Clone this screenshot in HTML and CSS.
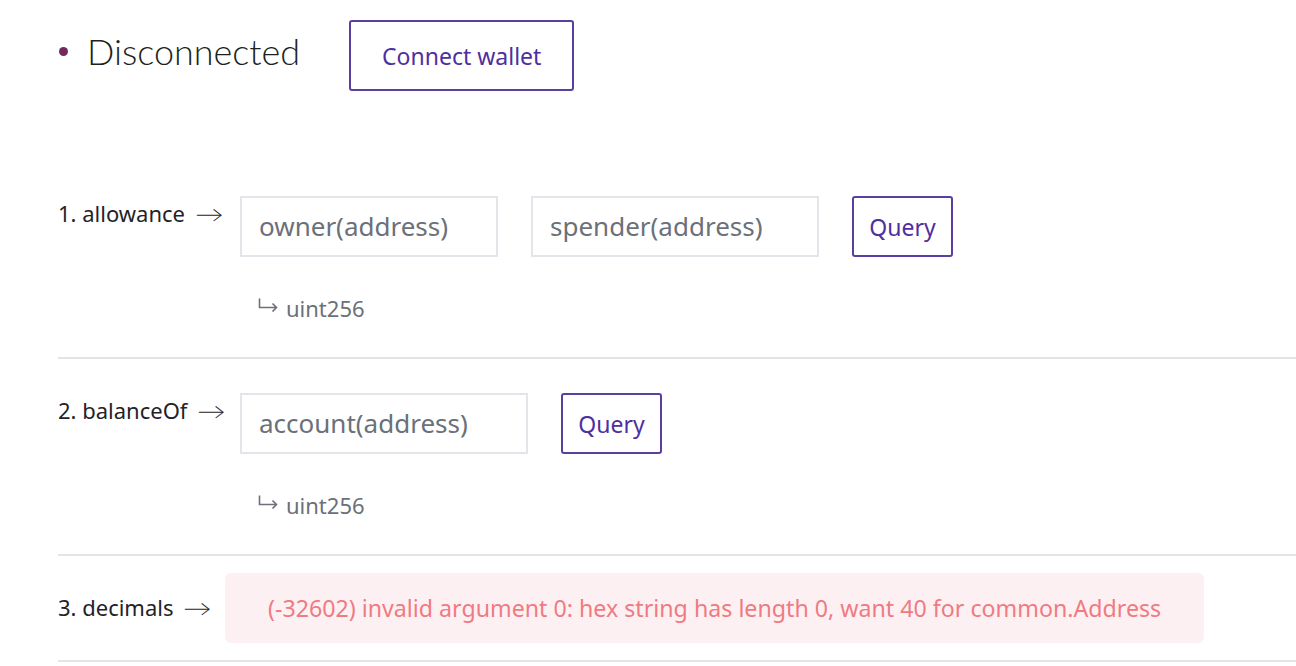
FILE: index.html
```html
<!DOCTYPE html>
<html>
<head>
<meta charset="utf-8">
<link rel="stylesheet" href="styles.css">
</head>
<body>
<div class="page">
  <header class="header">
    <div class="status"><span class="dot"></span><span class="status-text">Disconnected</span></div>
    <button class="btn btn-connect">Connect wallet</button>
  </header>

  <section class="row">
    <div class="line">
      <div class="label">1. allowance <span class="arrow">→</span></div>
      <input class="field w258" placeholder="owner(address)">
      <input class="field w288" placeholder="spender(address)">
      <button class="btn btn-query">Query</button>
    </div>
    <div class="returns"><svg class="ret-arrow" width="20" height="14" viewBox="0 0 20 14" aria-label="↳"><path d="M1.5 0.5 V9.5 H18.5 M14.5 5.5 L18.5 9.5 L14.5 13.5" fill="none" stroke="#6b7079" stroke-width="1.6" stroke-linejoin="miter"/></svg><span>uint256</span></div>
  </section>

  <section class="row">
    <div class="line">
      <div class="label">2. balanceOf <span class="arrow">→</span></div>
      <input class="field w288" placeholder="account(address)">
      <button class="btn btn-query">Query</button>
    </div>
    <div class="returns"><svg class="ret-arrow" width="20" height="14" viewBox="0 0 20 14" aria-label="↳"><path d="M1.5 0.5 V9.5 H18.5 M14.5 5.5 L18.5 9.5 L14.5 13.5" fill="none" stroke="#6b7079" stroke-width="1.6" stroke-linejoin="miter"/></svg><span>uint256</span></div>
  </section>

  <section class="row row-error">
    <div class="line">
      <div class="label label-err">3. decimals <span class="arrow">→</span></div>
      <div class="error">(-32602) invalid argument 0: hex string has length 0, want 40 for common.Address</div>
    </div>
  </section>
</div>
</body>
</html>
```

FILE: styles.css
```css
html, body {
  margin: 0;
  padding: 0;
  background: #ffffff;
}
body {
  font-family: "Noto Sans", Lato, sans-serif;
  color: #1f2328;
  overflow: hidden;
}
.page {
  padding-left: 58px;
  padding-top: 20px;
}
.header {
  display: flex;
  align-items: flex-start;
  gap: 49px;
  height: 71px;
  margin-bottom: 71px;
}
.status {
  display: flex;
  align-items: center;
  gap: 19px;
  padding-left: 1px;
  height: 62px;
}
.dot {
  width: 9px;
  height: 9px;
  border-radius: 50%;
  background: #722a5c;
}
.status-text {
  font-family: Lato, sans-serif;
  font-size: 36px;
  font-weight: 300;
  color: #1d1f22;
}
.btn {
  font-family: "Noto Sans", Lato, sans-serif;
  background: #fff;
  border: 2px solid #5b3fa0;
  border-radius: 3px;
  color: #4f2fa0;
  cursor: pointer;
  padding: 0;
}
.btn-connect {
  width: 225px;
  height: 71px;
  font-size: 23px;
}
.btn-query {
  width: 101px;
  height: 61px;
  font-size: 23px;
}
.row {
  padding-top: 34px;
  padding-bottom: 34px;
  border-bottom: 2px solid #e2e4e8;
}
.row-error {
  padding-top: 17px;
  padding-bottom: 17px;
}
.line {
  display: flex;
  align-items: flex-start;
  gap: 33px;
}
.label {
  font-size: 22px;
  line-height: 30px;
  height: 30px;
  padding-top: 2px;
  width: 167px;
  margin-right: -18px;
  white-space: nowrap;
}
.arrow {
  display: inline-block;
  line-height: 0;
  margin-left: 4px;
  transform: scaleX(1.3);
  transform-origin: left center;
  font-weight: 300;
}
.label-err {
  padding-top: 19px;
  width: 152px;
}
.field {
  box-sizing: border-box;
  height: 61px;
  border: 2px solid #e4e4ea;
  border-radius: 0;
  padding: 0 17px 1px;
  font-family: "Noto Sans", Lato, sans-serif;
  font-size: 26px;
  color: #1f2328;
  outline: none;
}
.field::placeholder {
  color: #6b7079;
}
.w258 { width: 258px; }
.w288 { width: 288px; }
.returns {
  margin-top: 36px;
  margin-left: 200px;
  font-size: 22px;
  line-height: 30px;
  height: 30px;
  color: #6b7079;
  display: flex;
  align-items: center;
  gap: 8px;
}
.ret-arrow {
  flex: none;
  margin-top: -6px;
}
.error {
  box-sizing: border-box;
  width: 979px;
  height: 70px;
  background: #fdf0f3;
  border-radius: 6px;
  color: #ef7b82;
  font-size: 23.2px;
  padding-left: 43px;
  display: flex;
  align-items: center;
}
```
